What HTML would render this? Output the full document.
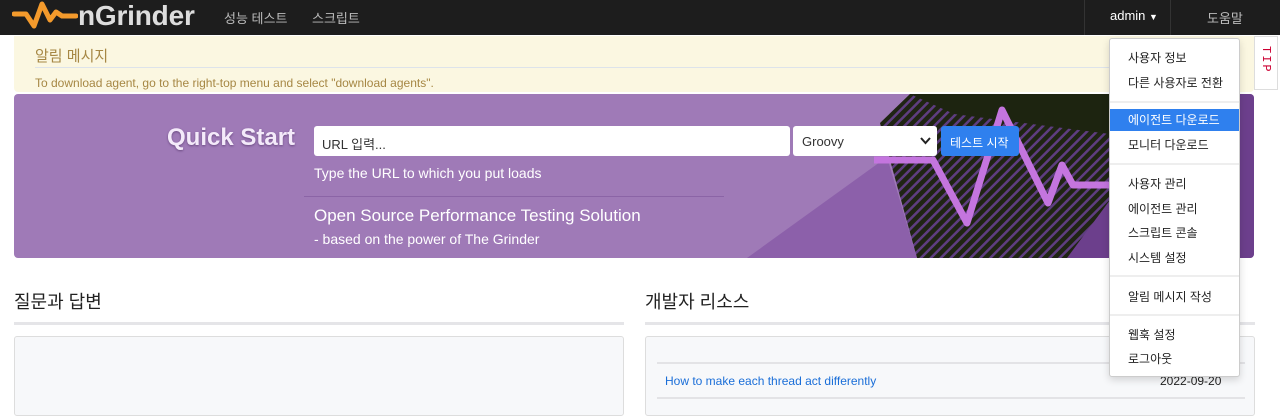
<!DOCTYPE html>
<html><head><meta charset="utf-8"><style>
*{box-sizing:border-box;margin:0;padding:0}
body{width:1280px;height:405px;overflow:hidden;background:#fff;font-family:"Liberation Sans","Noto Sans CJK KR",sans-serif;position:relative}
.nav{position:absolute;left:0;top:0;width:1280px;height:35px;background:#1d1d1d}
.nav .m{position:absolute;top:8px;color:#bbb;font-size:13px}
.abs{position:absolute}
.dd{position:absolute;left:1109px;top:38px;width:131px;height:339px;background:#fff;border:1px solid #ccc;border-radius:3px;box-shadow:0 3px 8px rgba(0,0,0,.15);font-size:12px;color:#222}
.dd div.i{position:absolute;left:18px}
.dd .sep{position:absolute;left:0;width:129px;height:2px;background:#eee}
</style></head><body>
<div class="nav">
<svg class="abs" style="left:12px;top:0" width="66" height="32" viewBox="0 0 66 32"><path d="M2 14 H14 L22 26 L30 4 L38 20 L44 12 L50 16 H64" fill="none" stroke="#f39a2c" stroke-width="5" stroke-linejoin="round" stroke-linecap="round"/></svg>
<div class="abs" style="left:78px;top:0;font-size:28px;font-weight:bold;color:#ddd;letter-spacing:-0.2px">nGrinder</div>
<div class="m" style="left:224px">성능 테스트</div>
<div class="m" style="left:312px">스크립트</div>
<div class="abs" style="left:1084px;top:0;width:1px;height:35px;background:#333"></div>
<div class="abs" style="left:1170px;top:0;width:1px;height:35px;background:#333"></div>
<div class="m" style="left:1110px;color:#fff">admin <span style="font-size:9px">▼</span></div>
<div class="m" style="left:1207px">도움말</div>
</div>
<div class="abs" style="left:14px;top:36px;width:1240px;height:56px;background:#fbf7e1;border-radius:0 0 4px 4px"></div>
<div class="abs" style="left:35px;top:45px;font-size:15px;color:#a68744">알림 메시지</div>
<div class="abs" style="left:35px;top:67px;width:1200px;height:1px;background:#dde3ea"></div>
<div class="abs" style="left:35px;top:76px;font-size:12px;color:#a68744">To download agent, go to the right-top menu and select "download agents".</div>
<div class="abs" style="left:1254px;top:36px;width:24px;height:54px;border:1px solid #ddd;background:#fff;color:#c03;font-family:'Liberation Mono',monospace;font-size:12px;writing-mode:vertical-rl;padding-top:9px;padding-right:4px;letter-spacing:2px">TIP</div>
<div class="abs" style="left:14px;top:94px;width:1240px;height:164px;border-radius:4px;overflow:hidden;background:#9f7ab7">
<svg width="1240" height="164" style="position:absolute;left:0;top:0">
<defs><pattern id="st" width="7" height="7" patternUnits="userSpaceOnUse" patternTransform="rotate(45)"><rect width="7" height="7" fill="#1f2413"/><rect width="2.5" height="7" fill="#5e3d80"/></pattern></defs>
<polygon points="1096,0 1240,0 1240,164 1053,164" fill="#6c3f8c"/>
<polygon points="896,0 1096,0 1096,106 1053,164 903,164 876,66 866,29" fill="url(#st)"/>
<polygon points="896,0 1096,0 1096,40 940,20" fill="#1d2410"/>
<polygon points="733,164 873,63 903,164" fill="#8c60aa"/>
<polyline points="860,66 919,66 953,129 988,16 1034,109 1048,71 1059,91 1100,91" fill="none" stroke="#c475de" stroke-width="7" stroke-linejoin="round"/>
</svg>
<div class="abs" style="left:153px;top:30px;font-size:24px;font-weight:bold;color:#f4eafa;text-shadow:0 1px 2px #6a4a80">Quick Start</div>
<div class="abs" style="left:300px;top:32px;width:476px;height:30px;background:#fff;border-radius:3px;font-size:13px;color:#333;padding:8px 8px">URL 입력...</div>
<div class="abs" style="left:779px;top:32px;width:144px;height:30px;background:#fff;border-radius:3px;font-size:13px;color:#333;padding:8px 9px">Groovy<svg style="position:absolute;right:6px;top:11px" width="11" height="8"><path d="M1 1 L5.5 6 L10 1" fill="none" stroke="#222" stroke-width="2"/></svg></div>
<div class="abs" style="left:927px;top:32px;width:78px;height:30px;background:#2f80ee;border-radius:3px;font-size:12px;color:#fff;padding:8px 9px">테스트 시작</div>
<div class="abs" style="left:300px;top:71px;font-size:14px;color:#fff">Type the URL to which you put loads</div>
<div class="abs" style="left:290px;top:102px;width:420px;height:1px;background:#8b64a6"></div>
<div class="abs" style="left:300px;top:112px;font-size:17px;color:#fff">Open Source Performance Testing Solution</div>
<div class="abs" style="left:300px;top:137px;font-size:14px;color:#fff">- based on the power of The Grinder</div>
</div>
<div class="abs" style="left:14px;top:288px;font-size:18px;color:#222">질문과 답변</div>
<div class="abs" style="left:645px;top:288px;font-size:18px;color:#222">개발자 리소스</div>
<div class="abs" style="left:14px;top:322px;width:610px;height:3px;background:#e5e5e8"></div>
<div class="abs" style="left:645px;top:322px;width:610px;height:3px;background:#e5e5e8"></div>
<div class="abs" style="left:14px;top:336px;width:610px;height:80px;background:#f7f8fa;border:1px solid #ddd;border-radius:3px"></div>
<div class="abs" style="left:645px;top:336px;width:610px;height:80px;background:#f7f8fa;border:1px solid #ddd;border-radius:3px"></div>
<div class="abs" style="left:657px;top:362px;width:588px;height:2px;background:#e3e3e6"></div>
<div class="abs" style="left:657px;top:397px;width:588px;height:2px;background:#e3e3e6"></div>
<div class="abs" style="left:665px;top:374px;font-size:12px;color:#1a6ed8">How to make each thread act differently</div>
<div class="abs" style="left:1160px;top:374px;font-size:12px;color:#222">2022-09-20</div>
<div class="dd">
<div class="i" style="top:10px">사용자 정보</div>
<div class="i" style="top:35px">다른 사용자로 전환</div>
<div class="sep" style="top:62px"></div>
<div style="position:absolute;left:0;top:70px;width:129px;height:22px;background:#2f80ee"></div>
<div class="i" style="top:72px;color:#fff">에이전트 다운로드</div>
<div class="i" style="top:97px">모니터 다운로드</div>
<div class="sep" style="top:124px"></div>
<div class="i" style="top:136px">사용자 관리</div>
<div class="i" style="top:161px">에이전트 관리</div>
<div class="i" style="top:185px">스크립트 콘솔</div>
<div class="i" style="top:210px">시스템 설정</div>
<div class="sep" style="top:236px"></div>
<div class="i" style="top:249px">알림 메시지 작성</div>
<div class="sep" style="top:275px"></div>
<div class="i" style="top:287px">웹훅 설정</div>
<div class="i" style="top:311px">로그아웃</div>
</div>
</body></html>
